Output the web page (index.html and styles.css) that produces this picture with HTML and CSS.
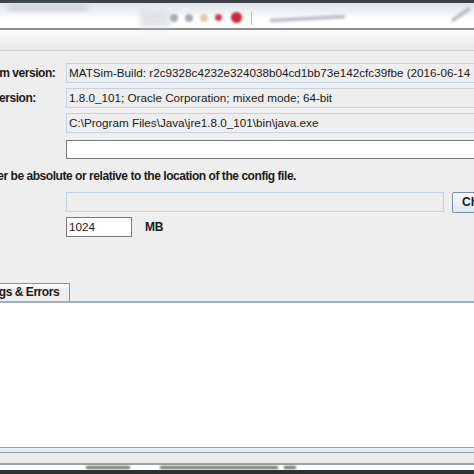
FILE: index.html
```html
<!DOCTYPE html>
<html lang="en">
<head>
    <meta charset="UTF-8">
    <title>MATSim GUI</title>
    <link rel="stylesheet" href="styles.css">
</head>
<body>
    <!-- window chrome -->
    <div class="top-strip"></div>
    <div class="title-area">
        <div class="blur-a"></div>
        <div class="blur-c"></div>
        <div class="dots">
            <span class="dot d1"></span><span class="dot d2"></span><span class="dot d3"></span><span class="dot d4"></span><span class="dot d5"></span>
        </div>
        <div class="sep"></div>
        <div class="blur-b"></div>
        <div class="blur-x"></div>
    </div>
    <div class="toolbar"></div>

    <!-- form -->
    <div class="form">
        <div class="row">
            <div class="label">MATSim version:</div>
            <div class="field ro">MATSim-Build: r2c9328c4232e324038b04cd1bb73e142cfc39fbe (2016-06-14 12:00)</div>
        </div>
        <div class="row">
            <div class="label">Java version:</div>
            <div class="field ro">1.8.0_101; Oracle Corporation; mixed mode; 64-bit</div>
        </div>
        <div class="row">
            <div class="label"></div>
            <div class="field ro">C:\Program Files\Java\jre1.8.0_101\bin\java.exe</div>
        </div>
        <div class="row row-edit">
            <div class="label"></div>
            <div class="field edit"></div>
        </div>
        <div class="note"><span>Paths can either be absolute or relative to the location of the config file.</span></div>
        <div class="row row-out">
            <div class="label"></div>
            <div class="field ro empty"></div>
            <button class="btn">Choose</button>
        </div>
        <div class="row row-mem">
            <div class="label"></div>
            <div class="field edit mem">1024</div>
            <div class="unit">MB</div>
        </div>
    </div>

    <!-- tabs -->
    <div class="tabs">
        <div class="tab">Logs &amp; Errors</div>
    </div>
    <div class="tab-body"></div>

    <!-- bottom chrome -->
    <div class="bottom">
        <div class="b-line"></div>
        <div class="b-strip"></div>
        <div class="b-line"></div>
        <div class="b-gray"></div>
        <div class="b-white"><span class="smudge s1"></span><span class="smudge s2"></span><span class="smudge s3"></span></div>
        <div class="b-dark"></div>
    </div>
</body>
</html>
```

FILE: styles.css
```css
* {
    margin: 0;
    padding: 0;
    box-sizing: border-box;
}

body {
    width: 474px;
    height: 474px;
    overflow: hidden;
    background-color: #eeeeee;
    font-family: 'Liberation Sans', Arial, sans-serif;
    font-size: 11.7px;
    color: #1a1a1a;
}

/* window chrome */
.top-strip {
    height: 3px;
    background-color: #3c4248;
}

.title-area {
    height: 27px;
    display: flex;
    align-items: center;
    background: linear-gradient(#dfe3ea, #eef0f4 35%, #ffffff 60%);
    border-bottom: 2px solid #8e8e8e;
    position: relative;
}

.blur-a {
    position: absolute;
    left: 8px;
    top: 2px;
    width: 80px;
    height: 6px;
    background-color: rgba(190, 196, 208, 0.6);
    filter: blur(2px);
}

.blur-c {
    position: absolute;
    left: 140px;
    top: 8px;
    width: 30px;
    height: 16px;
    background-color: rgba(205, 208, 214, 0.6);
    filter: blur(3px);
}

.dots {
    display: flex;
    align-items: center;
    gap: 7px;
    margin-left: 170px;
    margin-top: 4px;
    filter: blur(1px);
}

.dot {
    width: 8px;
    height: 8px;
    border-radius: 50%;
    background-color: #a9adb4;
}

.dot.d3 { background-color: #e6c8a8; }
.dot.d4 { background-color: #c8404a; width: 7px; height: 7px; }
.dot.d5 { background-color: #c42a34; width: 11px; height: 11px; margin-left: 2px; }

.sep {
    width: 1px;
    height: 14px;
    margin-left: 9px;
    margin-top: 4px;
    background-color: #c0c4ca;
}

.blur-b {
    width: 75px;
    height: 3px;
    margin-left: 18px;
    margin-top: 6px;
    background-color: #a8adb6;
    filter: blur(1.5px);
    transform: rotate(-3deg);
}

.blur-x {
    position: absolute;
    right: 2px;
    top: 10px;
    width: 22px;
    height: 3px;
    background-color: #a8adb6;
    filter: blur(1.5px);
    transform: rotate(-35deg);
}

.toolbar {
    height: 21px;
    background: linear-gradient(#fbfbfb, #e9e9e9);
    border-bottom: 1px solid #d2d2d2;
}

/* form */
.form {
    margin-left: -35px;
    padding-top: 12px;
}

.row {
    display: flex;
    align-items: center;
    height: 20px;
    margin-bottom: 5px;
}

.label {
    width: 101px;
    flex: none;
    font-size: 12px;
    letter-spacing: -0.45px;
    font-weight: bold;
    white-space: nowrap;
}

.field {
    flex: none;
    width: 460px;
    height: 20px;
    padding: 0 2px;
    line-height: 18px;
    white-space: nowrap;
    overflow: hidden;
}

.field.ro {
    background-color: #eeeeee;
    border: 1px solid #c3d3e3;
}

.field.edit {
    background-color: #ffffff;
    border: 1px solid #7a7a7a;
}

.row-edit {
    margin-top: 7px;
    height: 19px;
}

.row-edit .field {
    height: 19px;
}

/* text is anchored at its end, the start runs off the left edge */
.note {
    display: flex;
    justify-content: flex-end;
    width: 331px;
    margin-top: 7px;
    height: 20px;
    line-height: 20px;
    font-size: 12px;
    letter-spacing: -0.45px;
    font-weight: bold;
    white-space: nowrap;
}

.note span {
    flex: none;
}

.row-out {
    margin-top: 6px;
}

.field.empty {
    width: 378px;
}

.btn {
    flex: none;
    margin-left: 8px;
    width: 80px;
    height: 21px;
    border: 1px solid #7b8ea5;
    border-radius: 2px;
    background: linear-gradient(#f6f9fc, #dce8f4);
    font-family: inherit;
    font-size: 12px;
    font-weight: bold;
    text-align: left;
    padding-left: 9px;
    color: #1a1a1a;
}

.field.mem {
    width: 66px;
    padding-left: 2px;
}

.unit {
    margin-left: 13px;
    font-size: 12px;
    letter-spacing: -0.3px;
    font-weight: bold;
}

/* tabs */
.tabs {
    display: flex;
    margin-top: 46px;
    margin-left: -24px;
    border-bottom: 2px solid #9fb0c2;
}

.tab {
    height: 18px;
    padding: 0 10px 0 8px;
    line-height: 17px;
    font-size: 12px;
    letter-spacing: -0.45px;
    font-weight: bold;
    border: 1px solid #8f8f8f;
    border-bottom: none;
    background: linear-gradient(#ffffff, #eeeeee 30%);
}

.tab-body {
    height: 144px;
    background-color: #ffffff;
}

/* bottom chrome */
.bottom {
    display: flex;
    flex-direction: column;
}

.b-line {
    height: 1px;
    background-color: #8e9fb2;
}

.b-strip {
    height: 4px;
    background-color: #e9edf2;
}

.b-gray {
    height: 12px;
    background-color: #ececec;
    border-bottom: 2px solid #a0a0a0;
}

.b-white {
    height: 5px;
    background-color: #ffffff;
    position: relative;
}

.smudge {
    position: absolute;
    top: 1px;
    height: 3px;
    background-color: #6d6d6d;
    filter: blur(1px);
}

.smudge.s1 { left: 86px; width: 44px; }
.smudge.s2 { left: 160px; width: 118px; }
.smudge.s3 { left: 284px; width: 12px; }

.b-dark {
    height: 4px;
    background-color: #2c3036;
}
```
